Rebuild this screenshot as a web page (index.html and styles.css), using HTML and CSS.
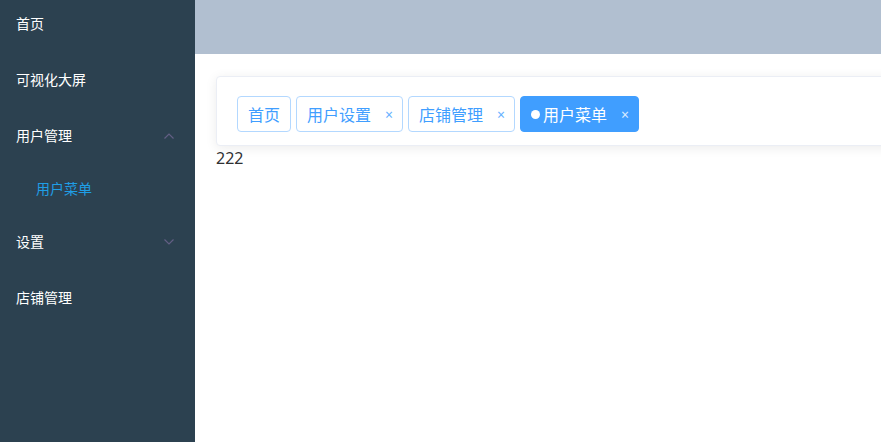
FILE: index.html
```html
<!DOCTYPE html>
<html>
    <head>
        <meta charset="utf-8">
        <title>后台管理</title>
        <link rel="stylesheet" href="styles.css">
    </head>
    <body>
        <div id="layout">
            <div id="sidebar">
                <ul class="menu">
                    <li class="menu-item">首页</li>
                    <li class="menu-item">可视化大屏</li>
                    <li class="menu-item">
                        <span>用户管理</span>
                        <svg class="arrow" width="12" height="8" viewBox="0 0 12 8"><path d="M1.5 6.5 L6 2 L10.5 6.5" fill="none" stroke="#635f85" stroke-width="1.2"/></svg>
                    </li>
                    <li class="menu-item sub active">用户菜单</li>
                    <li class="menu-item">
                        <span>设置</span>
                        <svg class="arrow" width="12" height="8" viewBox="0 0 12 8"><path d="M1.5 1.5 L6 6 L10.5 1.5" fill="none" stroke="#635f85" stroke-width="1.2"/></svg>
                    </li>
                    <li class="menu-item">店铺管理</li>
                </ul>
            </div>
            <div id="right">
                <div id="topbar"></div>
                <div id="content">
                    <div class="tags-card">
                        <span class="tag">首页</span>
                        <span class="tag">用户设置<i class="close">×</i></span>
                        <span class="tag">店铺管理<i class="close">×</i></span>
                        <span class="tag current"><b class="dot"></b>用户菜单<i class="close">×</i></span>
                    </div>
                    <p class="page-text">222</p>
                </div>
            </div>
        </div>
    </body>
</html>
```

FILE: styles.css
```css
body {
    margin: 0px;
    padding: 0px;
    font-family: "Noto Sans", "Noto Sans CJK SC", sans-serif;
    overflow: hidden;
}
#layout {
    display: flex;
    height: 442px;
}
#sidebar {
    width: 195px;
    flex-shrink: 0;
    background-color: #2c4150;
    overflow: hidden;
}
.menu {
    list-style: none;
    margin: -5px 0px 0px 0px;
    padding: 0px;
}
.menu-item {
    height: 56px;
    display: flex;
    align-items: center;
    justify-content: space-between;
    padding: 0px 20px 0px 16px;
    color: #ffffff;
    font-size: 14px;
}
.menu-item.sub {
    height: 50px;
    padding-left: 36px;
}
.menu-item.active {
    color: #1f9ee6;
}
.arrow {
    margin-top: 1px;
}
#right {
    flex: 1;
    min-width: 0;
    display: flex;
    flex-direction: column;
    overflow: hidden;
}
#topbar {
    height: 54px;
    background-color: #b1bfd0;
}
#content {
    padding: 22px 0px 0px 21px;
}
.tags-card {
    width: 720px;
    display: flex;
    gap: 5px;
    padding: 19px 20px 13px 20px;
    border: 1px solid #ebeef5;
    border-radius: 4px;
    background-color: #ffffff;
    box-shadow: 0px 2px 12px 0px rgba(0, 0, 0, 0.08);
}
.tag {
    display: inline-flex;
    align-items: center;
    height: 34px;
    padding: 0px 10px;
    border: 1px solid #b3d8ff;
    border-radius: 4px;
    color: #409eff;
    font-size: 16px;
    background-color: #ffffff;
}
.close {
    font-style: normal;
    font-size: 14px;
    margin-left: 14px;
    margin-right: -1px;
    opacity: 0.8;
}
.tag.current {
    background-color: #409eff;
    border-color: #409eff;
    color: #ffffff;
}
.dot {
    width: 9px;
    height: 9px;
    border-radius: 50%;
    background-color: #ffffff;
    margin-right: 3px;
}
.page-text {
    margin: 0px;
    color: #303133;
    font-size: 16px;
    line-height: 24px;
}
```
